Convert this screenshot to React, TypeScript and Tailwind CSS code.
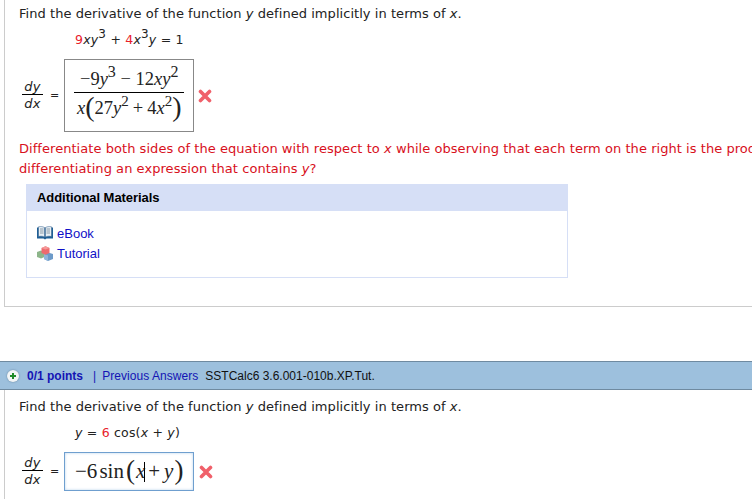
const verdana = "font-['DejaVu_Sans',sans-serif]";
const arial = "font-['Liberation_Sans',Arial,sans-serif]";
const serif = "font-['Liberation_Serif',serif]";

function Cross({ className = "" }: { className?: string }) {
  return (
    <svg width="14" height="14" viewBox="0 0 14 14" className={className}>
      <path d="M2.5 2.5 L11.5 11.5 M11.5 2.5 L2.5 11.5" stroke="#f0606a" strokeWidth="3.6" strokeLinecap="round" />
    </svg>
  );
}

function DyDx() {
  return (
    <div className={`flex items-center gap-[7px] ${verdana} text-[13px] text-[#222]`}>
      <div className="flex flex-col items-center w-[21px] ml-[3px]">
        <span className="italic leading-[15px] tracking-[0.4px]">dy</span>
        <div className="h-px w-full bg-black" />
        <span className="italic leading-[18px] tracking-[0.4px]">dx</span>
      </div>
      <span className="text-[11px] leading-none">=</span>
    </div>
  );
}

function BookIcon() {
  return (
    <svg width="16" height="14" viewBox="0 0 16 14" className="shrink-0 -mt-[2px]">
      <path d="M0 1.5 H7.5 L8 2.5 L8.5 1.5 H16 V12.5 H9.5 L8 13.6 L6.5 12.5 H0 Z" fill="#1f5f96" />
      <path d="M1.5 0.8 C4 0.3 6 0.6 7.6 1.6 V11 C6 10.2 4 10 1.5 10.5 Z" fill="#e8eff5" stroke="#2c5a86" strokeWidth="0.5" />
      <path d="M14.5 0.8 C12 0.3 10 0.6 8.4 1.6 V11 C10 10.2 12 10 14.5 10.5 Z" fill="#e8eff5" stroke="#2c5a86" strokeWidth="0.5" />
      <path d="M3 3 H6.5 M3 5 H6.5 M3 7 H6.5 M9.5 3 H13 M9.5 5 H13 M9.5 7 H13" stroke="#7f919f" strokeWidth="0.9" />
    </svg>
  );
}

function CubesIcon() {
  return (
    <svg width="16" height="15" viewBox="0 0 16 15" className="shrink-0">
      <path d="M0 6 L4 4.5 L7.5 6 V11 L4 12.5 L0 11 Z" fill="#8db58a" />
      <path d="M7 8 L11 6.5 L16 8 V13 L11 15 L7 13 Z" fill="#6d9bc9" />
      <path d="M7 8 L11 9.6 V15 L7 13 Z" fill="#8fb5da" />
      <path d="M4.5 2 L8.5 0.3 L12.5 2 V7 L8.5 8.8 L4.5 7 Z" fill="#ee6a6e" />
      <path d="M4.5 2 L8.5 3.6 L12.5 2 L8.5 0.3 Z" fill="#f59a9a" />
    </svg>
  );
}

function Prompt() {
  return (
    <p className={`${verdana} text-[13px] leading-4 text-[#222] tracking-[0.05px]`}>
      Find the derivative of the function <i>y</i> defined implicitly in terms of <i>x</i>.
    </p>
  );
}

export default function App() {
  return (
    <div className="w-[752px] h-[499px] overflow-hidden bg-white">
      {/* first question */}
      <div className="ml-1 h-[307px] border-l border-b border-[#ccc] pl-[14px] pt-[6px]">
        <Prompt />
        <p className={`${verdana} mt-[10px] ml-[56px] text-[12.5px] leading-4 text-[#222] tracking-[0.2px]`}>
          <span className="text-[#e8202a]">9</span>
          <i>xy</i>
          <sup className="text-[12px] leading-none">3</sup> + <span className="text-[#e8202a]">4</span>
          <i>x</i>
          <sup className="text-[12px] leading-none">3</sup>
          <i>y</i> = 1
        </p>

        <div className="mt-[11px] flex items-center">
          <DyDx />
          <div className={`ml-[5px] w-[130px] h-[73px] border border-[#888] flex flex-col items-center justify-center ${serif} text-[#222]`}>
            <div className="w-[110px] text-center text-[18.5px] leading-[25px] border-b border-black whitespace-nowrap">
              −9<i>y</i>
              <sup className="text-[16px] leading-none">3</sup> − 12<i>xy</i>
              <sup className="text-[16px] leading-none">2</sup>
            </div>
            <div className="flex items-center h-[32px] text-[18.5px] whitespace-nowrap">
              <i>x</i>
              <span className="text-[28px] leading-none font-light -mt-[3px]">(</span>
              <span>
                27<i>y</i>
                <sup className="text-[15px] leading-none">2</sup>
              </span>
              <span className="mx-[4px]">+</span>
              <span>
                4<i>x</i>
                <sup className="text-[15px] leading-none">2</sup>
              </span>
              <span className="text-[28px] leading-none font-light -mt-[3px]">)</span>
            </div>
          </div>
          <Cross className="ml-[4px]" />
        </div>

        <p className={`${verdana} mt-[7px] text-[13px] leading-[20px] text-[#d8101c] tracking-[0.05px] whitespace-nowrap`}>
          Differentiate both sides of the equation with respect to <i>x</i> while observing that each term on the right is the product of two functions, and
          <br />
          differentiating an expression that contains <i>y</i>?
        </p>

        <div className={`mt-[5px] ml-[7px] w-[542px] h-[94px] border border-[#d6dff6] ${arial}`}>
          <div className="-mx-px -mt-px h-[27px] bg-[#d6dff6] pl-[11px] flex items-center text-[13px] tracking-[-0.05px] font-bold text-black">
            Additional Materials
          </div>
          <div className="pl-[10px] pt-[14px] text-[13px] text-[#1010c8] flex flex-col gap-[3px]">
            <div className="flex items-center gap-1 h-[17px]">
              <BookIcon />
              <span>eBook</span>
            </div>
            <div className="flex items-center gap-1 h-[17px]">
              <CubesIcon />
              <span>Tutorial</span>
            </div>
          </div>
        </div>
      </div>

      {/* points bar */}
      <div className={`mt-[54px] h-[29px] bg-[#9dc0dd] border-t border-b border-[#6f8aa0] flex items-center pl-[7px] ${arial} text-[12px] whitespace-nowrap`}>
        <span className="w-[12px] h-[12px] rounded-full bg-[#f2f5f7] shadow-[0_0_2px_#5f7f9a] flex items-center justify-center">
          <svg width="8" height="8" viewBox="0 0 8 8">
            <path d="M4 1 V7 M1 4 H7" stroke="#1f8a2a" strokeWidth="2" />
          </svg>
        </span>
        <span className="ml-[8px] font-bold text-[#1414b4]">0/1 points</span>
        <span className="ml-[10px] text-[#1414b4]">|</span>
        <span className="ml-[6px] tracking-[0.05px] text-[#1414b4]">Previous Answers</span>
        <span className="ml-[7px] text-[#111]">SSTCalc6 3.6.001-010b.XP.Tut.</span>
      </div>

      {/* second question */}
      <div className="ml-1 h-[110px] border-l border-[#ccc] pl-[14px] pt-[9px]">
        <Prompt />
        <p className={`${verdana} mt-[10px] ml-[56px] text-[12.5px] leading-4 text-[#222] tracking-[0.2px]`}>
          <i>y</i> = <span className="text-[#e8202a]">6</span> cos(<i>x</i> + <i>y</i>)
        </p>
        <div className="mt-[11px] flex items-center">
          <DyDx />
          <div className={`ml-[5px] w-[130px] h-[39px] border border-[#6f9fcf] shadow-[inset_0_0_3px_#b9d3ec] flex items-center justify-center ${serif} text-[21px] text-[#222] whitespace-nowrap`}>
            −6<span className="ml-[2px]">sin</span>
            <span className="text-[27px] leading-none font-light ml-[2px] -mt-[3px]">(</span>
            <i className="ml-[1px]">x</i>
            <span className="w-px h-[20px] bg-black -ml-px" />
            <span className="ml-[3px]">+</span>
            <i className="ml-[4px]">y</i>
            <span className="text-[27px] leading-none font-light ml-[1px] -mt-[3px]">)</span>
          </div>
          <Cross className="ml-[5px]" />
        </div>
      </div>
    </div>
  );
}
